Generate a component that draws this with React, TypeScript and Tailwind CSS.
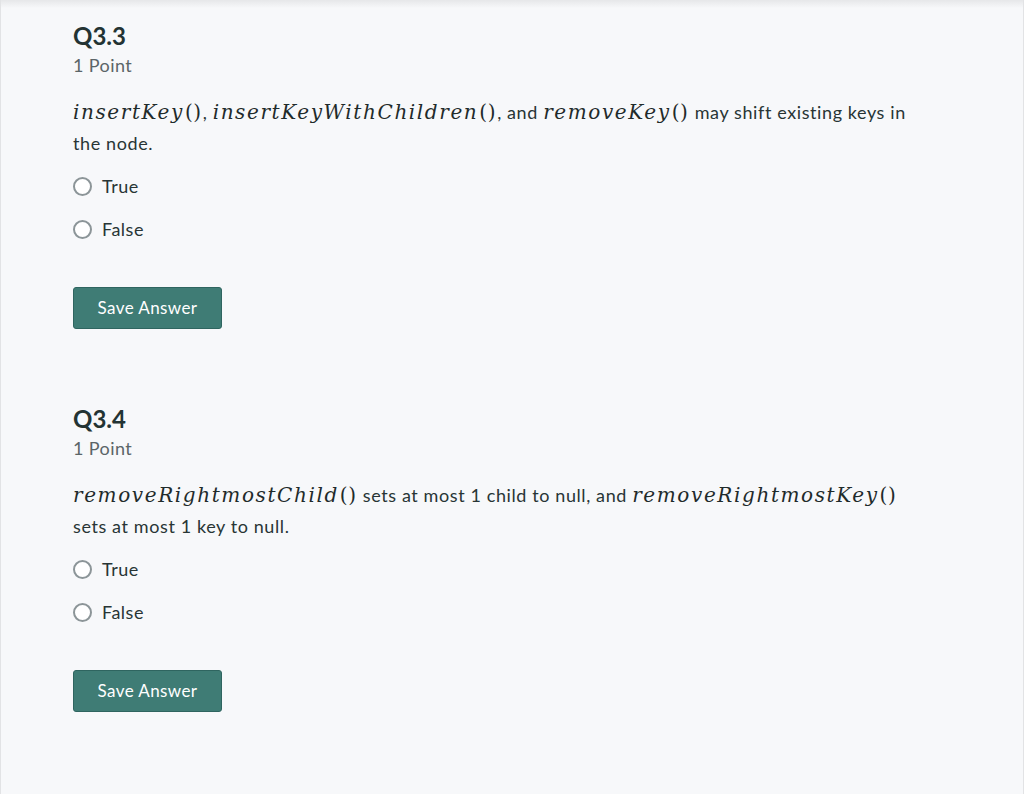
import React from "react"

const sans = { fontFamily: "Lato, 'Open Sans', sans-serif" }

function M({ children }: { children: string }) {
  return (
    <span className="font-['DejaVu_Serif',serif] text-[20px] leading-none text-[#1f2b2b]">
      <span className="italic tracking-[1.6px] pr-[1px]">{children}</span>
      <span className="pr-[1px]">()</span>
    </span>
  )
}

function Radio({ label }: { label: string }) {
  return (
    <label className="flex items-center gap-[10px] h-[43px]">
      <span className="w-[19px] h-[19px] rounded-full border-2 border-[#8c9598] bg-white" />
      <span className="text-[18px] tracking-[0.5px] text-[#283535]">{label}</span>
    </label>
  )
}

function Question({ num, body }: { num: string; body: React.ReactNode }) {
  return (
    <section className="mb-[76px]">
      <h2 className="text-[24px] font-bold text-[#233333] leading-[28px]">{num}</h2>
      <div className="text-[18px] tracking-[0.4px] text-[#5b6568] leading-[28px] mt-[1px]">1 Point</div>
      <p className="mt-[18px] text-[18px] tracking-[0.6px] text-[#283535] leading-[31px] max-w-[840px]">{body}</p>
      <div className="mt-[6px]">
        <Radio label="True" />
        <Radio label="False" />
      </div>
      <button className="mt-[36px] w-[149px] h-[42px] rounded-[3px] bg-[#3f7c75] border border-[#2f6560] text-white text-[17px] tracking-[0.4px]">
        Save Answer
      </button>
    </section>
  )
}

export default function App() {
  return (
    <div className="min-h-screen bg-[#f7f8fa] border-x border-[#e2e3e5]" style={sans}>
      <div className="h-[8px] bg-gradient-to-b from-[#e6e7e9] to-[#f7f8fa]" />
      <div className="pl-[72px] pt-[14px]">
        <Question
          num="Q3.3"
          body={
            <>
              <M>insertKey</M>, <M>insertKeyWithChildren</M>, and <M>removeKey</M> may shift existing keys in the node.
            </>
          }
        />
        <Question
          num="Q3.4"
          body={
            <>
              <M>removeRightmostChild</M> sets at most 1 child to null, and <M>removeRightmostKey</M> sets at most 1 key to null.
            </>
          }
        />
      </div>
    </div>
  )
}
